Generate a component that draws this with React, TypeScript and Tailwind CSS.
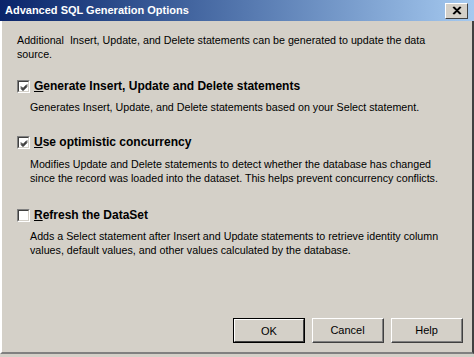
import React from "react";

function CheckBox({ checked }: { checked: boolean }) {
  return (
    <div className="w-[13px] h-[13px] bg-white border-t border-l border-t-[#808080] border-l-[#808080] border-b border-r border-b-white border-r-white shrink-0 relative">
      <div className="absolute inset-0 border-t border-l border-t-[#404040] border-l-[#404040] border-b border-r border-b-[#d4d0c8] border-r-[#d4d0c8]">
        {checked && (
          <svg width="11" height="11" viewBox="0 0 11 11" className="absolute left-0 top-0">
            <path d="M2 4.5 L4 6.5 L8 2.5 M2 5.5 L4 7.5 L8 3.5 M2 6.5 L4 8.5 L8 4.5" stroke="#000" strokeWidth="1" fill="none" />
          </svg>
        )}
      </div>
    </div>
  );
}

function Btn({ label, def }: { label: string; def?: boolean }) {
  return (
    <div
      className={
        "w-[72px] h-[25px] flex items-center justify-center bg-[#d4d0c8] text-[11px] text-black " +
        (def
          ? "border border-black"
          : "border-t border-l border-t-white border-l-white border-b border-r border-b-[#404040] border-r-[#404040]")
      }
    >
      <div
        className={
          "w-full h-full flex items-center justify-center " +
          (def
            ? "border-t border-l border-t-white border-l-white border-b border-r border-b-[#404040] border-r-[#404040]"
            : "border-b border-r border-b-[#808080] border-r-[#808080]")
        }
      >
        {label}
      </div>
    </div>
  );
}

export default function App() {
  return (
    <div
      className="w-[474px] h-[357px] bg-[#d4d0c8] flex flex-col overflow-hidden relative"
      style={{ fontFamily: "Tahoma, 'Liberation Sans', Arial, sans-serif" }}
    >
      <div className="h-[21px] shrink-0 flex items-center justify-between pl-[5px] pr-[6px] bg-gradient-to-r from-[#0a246a] to-[#a6caf0]">
        <span className="text-white font-bold text-[11px] leading-none">Advanced SQL Generation Options</span>
        <div className="w-[23px] h-[16px] bg-[#d4d0c8] border-t border-l border-t-white border-l-white border-b border-r border-b-[#404040] border-r-[#404040] flex items-center justify-center">
          <svg width="10" height="9" viewBox="0 0 10 9">
            <path d="M1 1 L8 8 M2 1 L9 8 M8 1 L1 8 M9 1 L2 8" stroke="#000" strokeWidth="1.2" fill="none" />
          </svg>
        </div>
      </div>
      <div className="flex-1 flex flex-col border-l-2 border-l-white border-r-2 border-r-[#404040] border-b-2 border-b-[#808080] mb-[3px] text-[10.7px] leading-[14px] text-black">
        <div className="pl-[15px] pt-[12px] pr-[20px]">
          Additional&nbsp; Insert, Update, and Delete statements can be generated to update the data source.
        </div>
        <div className="flex items-center gap-[4px] pl-[15px] mt-[18px]">
          <CheckBox checked />
          <span className="font-bold text-[12px]">
            <span className="underline">G</span>enerate Insert, Update and Delete statements
          </span>
        </div>
        <div className="pl-[28px] mt-[7px]">
          Generates Insert, Update, and Delete statements based on your Select statement.
        </div>
        <div className="flex items-center gap-[4px] pl-[15px] mt-[21px]">
          <CheckBox checked />
          <span className="font-bold text-[12px]">
            <span className="underline">U</span>se optimistic concurrency
          </span>
        </div>
        <div className="pl-[28px] mt-[8px] pr-[20px]">
          Modifies Update and Delete statements to detect whether the database has changed
          <br />
          since the record was loaded into the dataset. This helps prevent concurrency conflicts.
        </div>
        <div className="flex items-center gap-[4px] pl-[15px] mt-[23px]">
          <CheckBox checked={false} />
          <span className="font-bold text-[12px]">
            <span className="underline">R</span>efresh the DataSet
          </span>
        </div>
        <div className="pl-[28px] mt-[7px]">
          Adds a Select statement after Insert and Update statements to retrieve identity column
          <br />
          values, default values, and other values calculated by the database.
        </div>
        <div className="flex justify-end gap-[7px] pr-[9px] mt-auto mb-[9px]">
          <Btn label="OK" def />
          <Btn label="Cancel" />
          <Btn label="Help" />
        </div>
      </div>
    </div>
  );
}
